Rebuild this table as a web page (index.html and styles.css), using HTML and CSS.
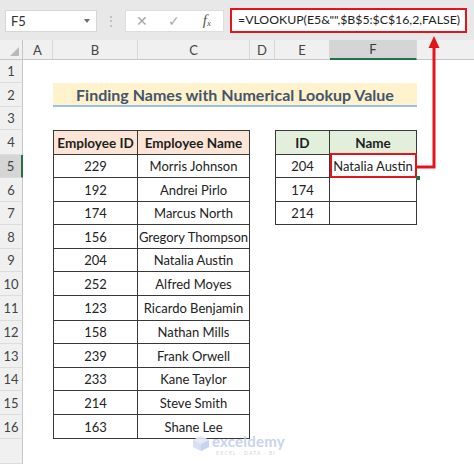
FILE: index.html
```html
<!DOCTYPE html>
<html>
<head>
<meta charset="utf-8">
<link rel="stylesheet" href="styles.css">
</head>
<body>
<div class="app">
  <div class="fbar">
    <div class="namebox"><span>F5</span><span class="caret"></span></div>
    <div class="dots">⋮</div>
    <div class="fxbox">
      <span class="btn cancel">✕</span>
      <span class="btn ok">✓</span>
      <span class="btn fx"><i>f</i><sub>x</sub></span>
    </div>
    <div class="formula">=VLOOKUP(E5&amp;"",$B$5:$C$16,2,FALSE)</div>
  </div>

  <div class="sheet">
    <div class="corner"><svg width="9" height="9" viewBox="0 0 9 9"><polygon points="9,0 9,9 0,9" fill="#b9b9b9"/></svg></div>
    <div class="ch">A</div>
    <div class="ch">B</div>
    <div class="ch">C</div>
    <div class="ch">D</div>
    <div class="ch">E</div>
    <div class="ch sel">F</div>
    <div class="ch last"></div>

    <div class="rh">1</div>
    <div class="rh">2</div>
    <div class="rh">3</div>
    <div class="rh">4</div>
    <div class="rh sel">5</div>
    <div class="rh">6</div>
    <div class="rh">7</div>
    <div class="rh">8</div>
    <div class="rh">9</div>
    <div class="rh">10</div>
    <div class="rh">11</div>
    <div class="rh">12</div>
    <div class="rh">13</div>
    <div class="rh">14</div>
    <div class="rh">15</div>
    <div class="rh">16</div>
    <div class="rh"></div>

    <div class="title">Finding Names with Numerical Lookup Value</div>

    <div class="tbl t1">
      <div class="c hd hd1">Employee ID</div><div class="c hd hd1">Employee Name</div>
      <div class="c">229</div><div class="c">Morris Johnson</div>
      <div class="c">192</div><div class="c">Andrei Pirlo</div>
      <div class="c">174</div><div class="c">Marcus North</div>
      <div class="c">156</div><div class="c">Gregory Thompson</div>
      <div class="c">204</div><div class="c">Natalia Austin</div>
      <div class="c">252</div><div class="c">Alfred Moyes</div>
      <div class="c">123</div><div class="c">Ricardo Benjamin</div>
      <div class="c">158</div><div class="c">Nathan Mills</div>
      <div class="c">239</div><div class="c">Frank Orwell</div>
      <div class="c">233</div><div class="c">Kane Taylor</div>
      <div class="c">214</div><div class="c">Steve Smith</div>
      <div class="c">163</div><div class="c">Shane Lee</div>
    </div>

    <div class="tbl t2">
      <div class="c hd hd2">ID</div><div class="c hd hd2">Name</div>
      <div class="c">204</div><div class="c sel"><span>Natalia Austin</span></div>
      <div class="c">174</div><div class="c"></div>
      <div class="c">214</div><div class="c"></div>
    </div>
  </div>

  <div class="wm">
    <svg class="wm-logo" width="16" height="15" viewBox="0 0 16 15">
      <polygon points="8,0 16,4 16,11 8,15 0,11 0,4" fill="#d3ddf1"/>
      <polygon points="8,0 16,4 8,8 0,4" fill="#e3e9f6"/>
      <polygon points="8,8 16,4 16,11 8,15" fill="#c2d0ec"/>
    </svg>
    <div class="wm-text">
      <div class="wm-name">exceldemy</div>
      <div class="wm-sub">EXCEL · DATA · BI</div>
    </div>
  </div>

  <svg class="arrow" width="474" height="464" viewBox="0 0 474 464">
    <polyline points="417,167 434,167 434,47" fill="none" stroke="#e3141c" stroke-width="3"/>
    <polygon points="428.5,48 439.5,48 434,36" fill="#e3141c"/>
  </svg>
</div>
</body>
</html>
```

FILE: styles.css
```css
* {
  box-sizing: border-box;
  margin: 0;
  padding: 0;
}

body {
  margin: 0;
  width: 474px;
  height: 464px;
  overflow: hidden;
  background: #fff;
  font-family: Lato, "Open Sans", sans-serif;
}

.app {
  position: relative;
  width: 474px;
  height: 464px;
  overflow: hidden;
}

/* formula bar */
.fbar {
  height: 40px;
  background: #e8e8e8;
  display: flex;
  align-items: flex-start;
  padding: 8px 0 0 5px;
}

.namebox {
  margin-top: 2px;
  width: 92px;
  height: 22px;
  background: #fff;
  border: 1px solid #d6d6d6;
  display: flex;
  align-items: center;
  justify-content: space-between;
  padding: 0 6px 0 5px;
  font-size: 13px;
  color: #333;
}

.caret {
  width: 0;
  height: 0;
  border-left: 3.5px solid transparent;
  border-right: 3.5px solid transparent;
  border-top: 4px solid #6d6d6d;
}

.dots {
  width: 28px;
  margin-top: 2px;
  text-align: center;
  color: #b0b0b0;
  font-size: 12px;
  line-height: 22px;
}

.fxbox {
  margin-top: 2px;
  width: 99px;
  height: 22px;
  background: #fff;
  border: 1px solid #dedede;
  display: flex;
  align-items: center;
}

.btn {
  width: 33px;
  text-align: center;
  font-size: 14px;
  color: #a8a8a8;
  line-height: 20px;
}

.btn.fx {
  color: #555;
  font-family: "Liberation Serif", serif;
  font-size: 15px;
}

.btn.fx sub {
  font-size: 9px;
  font-style: italic;
  vertical-align: -1px;
}

.formula {
  margin-left: 6px;
  width: 237px;
  height: 25px;
  background: #fff;
  border: 2.5px solid #e3141c;
  font-size: 12.3px;
  line-height: 20px;
  padding-left: 6px;
  color: #222;
  white-space: nowrap;
  overflow: hidden;
}

/* sheet */
.sheet {
  display: grid;
  grid-template-columns: 23px 30px 85px 112px 25px 55px 87px 57px;
  grid-template-rows: 20px 23px 24px 23px 25px 23px 24px 23px 24px 23px 24px 25px 23px 24px 23px 24px 24px 25px;
}

.corner {
  background: #f0f0f0;
  border-right: 1px solid #c6c6c6;
  border-bottom: 1px solid #c6c6c6;
  display: flex;
  align-items: flex-end;
  justify-content: flex-end;
  padding: 0 3px 3px 0;
}

.ch {
  background: #f0f0f0;
  border-bottom: 1px solid #c6c6c6;
  border-right: 1px solid #d8d8d8;
  font-size: 13px;
  color: #444;
  display: flex;
  align-items: center;
  justify-content: center;
}

.ch.sel {
  background: #d5d5d5;
  border-bottom: 2px solid #217346;
  color: #3a3a3a;
}

.ch.last {
  border-right: none;
}

.rh {
  grid-column: 1;
  background: #f0f0f0;
  border-right: 1px solid #c6c6c6;
  border-bottom: 1px solid #dddddd;
  font-size: 13px;
  color: #444;
  display: flex;
  align-items: center;
  justify-content: center;
}

.rh.sel {
  background: #d5d5d5;
  border-right: 2px solid #217346;
}

.title {
  grid-column: 3 / 8;
  grid-row: 3;
  background: #fff2cc;
  border-bottom: 2px solid #9bc2e6;
  font-weight: 700;
  font-size: 16px;
  color: #44546a;
  display: flex;
  align-items: center;
  justify-content: center;
  white-space: nowrap;
}

.tbl {
  display: grid;
}

.t1 {
  grid-column: 3 / 5;
  grid-row: 5 / 18;
  grid-template-columns: 85px 112px;
  grid-template-rows: 25px 23px 24px 23px 24px 23px 24px 25px 23px 24px 23px 24px 24px;
}

.t2 {
  grid-column: 6 / 8;
  grid-row: 5 / 9;
  grid-template-columns: 55px 87px;
  grid-template-rows: 25px 23px 24px 23px;
}

.c {
  border-right: 1px solid #383838;
  border-bottom: 1px solid #383838;
  display: flex;
  align-items: center;
  justify-content: center;
  font-size: 13px;
  color: #222;
  white-space: nowrap;
  overflow: hidden;
}

.tbl > .c:nth-child(odd) {
  border-left: 1px solid #383838;
}

.hd {
  border-top: 1px solid #383838;
  font-weight: 700;
  font-size: 13.5px;
  color: #1e1e1e;
}

.hd1 {
  background: #fce4d6;
}

.hd2 {
  background: #e2efda;
}

.c.sel {
  position: relative;
  overflow: visible;
}

.c.sel span {
  position: relative;
  z-index: 1;
}

.c.sel::after {
  content: "";
  position: absolute;
  left: 0;
  top: -2px;
  right: -1px;
  bottom: -1px;
  border: 2.5px solid #e3141c;
  z-index: 2;
}

.c.sel::before {
  content: "";
  position: absolute;
  right: -4px;
  bottom: -3px;
  width: 4px;
  height: 4px;
  background: #217346;
  z-index: 3;
}

/* watermark */
.wm {
  position: absolute;
  left: 193px;
  top: 434px;
  display: flex;
  align-items: flex-start;
  gap: 3px;
  opacity: 0.9;
}

.wm-logo {
  margin-top: 2px;
}

.wm-name {
  font-family: Lato, sans-serif;
  font-weight: 700;
  font-size: 15px;
  line-height: 15px;
  color: #c3d0ec;
  letter-spacing: 0.2px;
}

.wm-sub {
  margin-top: 1px;
  font-size: 5px;
  line-height: 6px;
  letter-spacing: 1.2px;
  color: #c9d3e6;
  padding-left: 4px;
}

.arrow {
  position: absolute;
  left: 0;
  top: 0;
  pointer-events: none;
}
```
